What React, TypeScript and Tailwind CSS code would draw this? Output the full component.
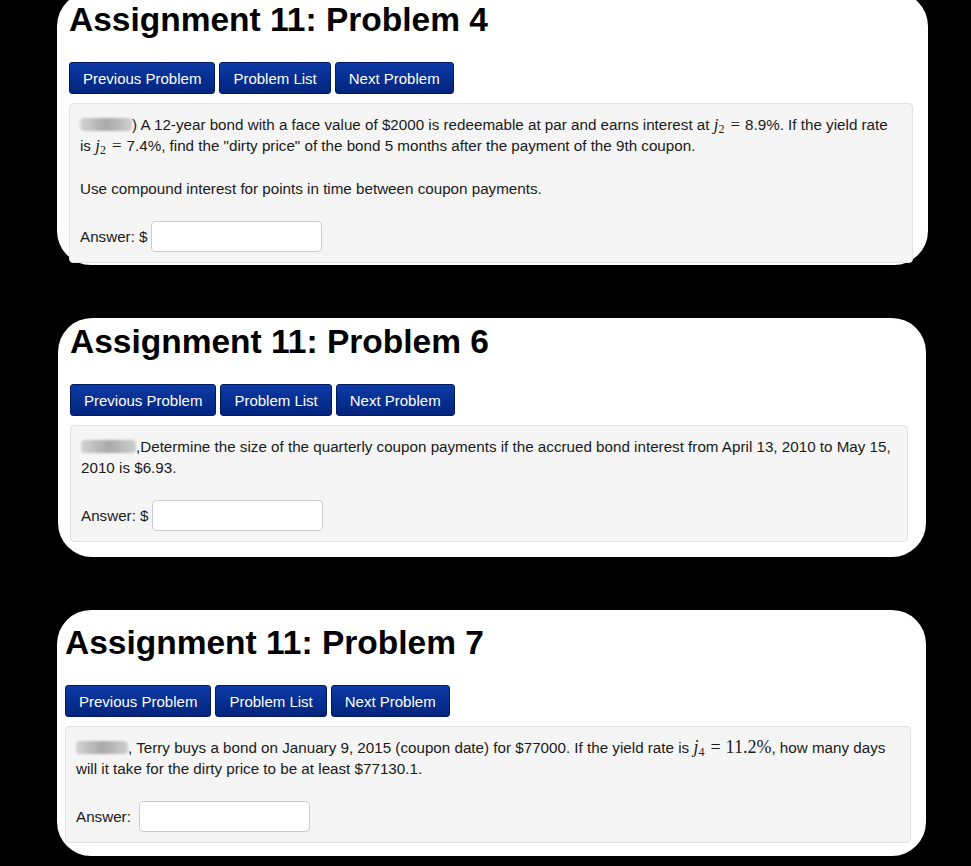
import type { ReactNode } from 'react';

const sans = { fontFamily: '"Liberation Sans", Arial, Helvetica, sans-serif' };

function Blur({ w = 'w-[52px]' }: { w?: string }) {
  return (
    <span
      className={`inline-block ${w} h-[13px] align-[-1px] rounded-sm bg-gradient-to-r from-[#d4d4d4] via-[#a9a9a9] to-[#cfcfcf] blur-[1.2px]`}
    />
  );
}

// j_n in MathJax-like serif
function J({ n }: { n: string }) {
  return (
    <span className="font-['Liberation_Serif',serif]">
      <i className="text-[17px] leading-none">j</i>
      <span className="relative top-[3px] text-[12px] leading-none">{n}</span>
      <span className="ml-[6px] mr-[5px] text-[17px] leading-none">=</span>
    </span>
  );
}

function NavButtons() {
  const cls =
    'h-[32px] px-[13px] rounded-[3px] border border-[#021a5c] bg-gradient-to-b from-[#0c3aa6] to-[#03247d] text-white text-[15px] leading-none';
  return (
    <div className="flex gap-[4px]">
      <button className={cls}>Previous Problem</button>
      <button className={cls}>Problem List</button>
      <button className={cls}>Next Problem</button>
    </div>
  );
}

function Answer({ dollar = true }: { dollar?: boolean }) {
  return (
    <div className={`flex items-center ${dollar ? 'gap-[3px]' : 'gap-[8px]'}`}>
      <span>Answer:{dollar ? ' $' : ''}</span>
      <input className="w-[171px] h-[31px] rounded-[4px] border border-[#cccccc] bg-white" />
    </div>
  );
}

function Card({
  num,
  className,
  wellClass,
  children,
}: {
  num: number;
  className: string;
  wellClass: string;
  children: ReactNode;
}) {
  return (
    <div className={`bg-white rounded-[34px] ${className}`}>
      <h1 className="text-[33.5px] leading-[40px] font-bold text-black mb-[22px]">
        Assignment 11: Problem {num}
      </h1>
      <NavButtons />
      <div
        className={`mt-[9px] bg-[#f5f5f5] border border-[#e3e3e3] rounded-[4px] px-[10px] py-[10px] text-[15.2px] leading-[21px] text-[#1a1a1a] ${wellClass}`}
      >
        {children}
      </div>
    </div>
  );
}

export default function App() {
  return (
    <div className="bg-black w-[971px] h-[866px] overflow-hidden" style={sans}>
      <div className="flex flex-col gap-[53px] -mt-[8px]">
        <Card num={4} className="ml-[57px] w-[871px] pl-[12px] pt-[8px] pb-[2px]" wellClass="w-[844px]">
          <p>
            <Blur />) A 12-year bond with a face value of $2000 is redeemable at par and earns interest at{' '}
            <J n="2" />
            8.9%. If the yield rate is <J n="2" />
            7.4%, find the "dirty price" of the bond 5 months after the payment of the 9th coupon.
          </p>
          <p className="mt-[22px]">Use compound interest for points in time between coupon payments.</p>
          <div className="mt-[22px]">
            <Answer />
          </div>
        </Card>

        <Card num={6} className="ml-[58px] w-[868px] pl-[12px] pt-[4px] pb-[15px]" wellClass="w-[838px]">
          <p>
            <Blur w="w-[55px]" />,Determine the size of the quarterly coupon payments if the accrued bond interest from
            April 13, 2010 to May 15, 2010 is $6.93.
          </p>
          <div className="mt-[22px]">
            <Answer />
          </div>
        </Card>

        <Card num={7} className="ml-[57px] w-[869px] pl-[8px] pt-[13px] pb-[13px]" wellClass="w-[846px]">
          <p>
            <Blur />, Terry buys a bond on January 9, 2015 (coupon date) for $77000. If the yield rate is{' '}
            <span className="font-['Liberation_Serif',serif] text-[18px] leading-none">
              <i>j</i>
              <span className="relative top-[3px] text-[12px] leading-none">4</span>
              <span className="ml-[6px] mr-[5px]">=</span>11.2%
            </span>
            , how many days will it take for the dirty price to be at least $77130.1.
          </p>
          <div className="mt-[22px]">
            <Answer dollar={false} />
          </div>
        </Card>
      </div>
    </div>
  );
}
